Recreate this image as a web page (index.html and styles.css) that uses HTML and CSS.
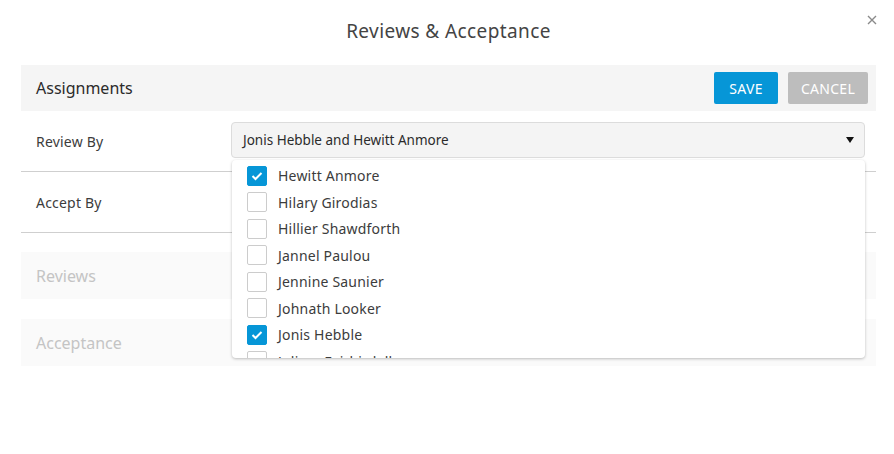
FILE: index.html
```html
<!DOCTYPE html>
<html>
<head>
<meta charset="utf-8">
<link rel="stylesheet" href="styles.css">
</head>
<body>
<div class="dialog">
  <header class="dialog-head">
    <h1 class="title">Reviews &amp; Acceptance</h1>
    <button class="close" aria-label="Close">
      <svg width="10" height="10" viewBox="0 0 10 10"><path d="M1 1L9 9M9 1L1 9" stroke="#8a8a8a" stroke-width="1.4"/></svg>
    </button>
  </header>
  <div class="section-bar">
    <span class="section-title">Assignments</span>
    <div class="actions">
      <button class="btn btn-save">SAVE</button>
      <button class="btn btn-cancel">CANCEL</button>
    </div>
  </div>
  <div class="field-row">
    <span class="field-label">Review By</span>
    <div class="select-wrap">
      <div class="select">
        <span>Jonis Hebble and Hewitt Anmore</span>
        <svg class="caret" width="8" height="6" viewBox="0 0 8 6"><path d="M0 0H8L4 6Z" fill="#111"/></svg>
      </div>
      <div class="menu">
        <ul class="menu-list">
          <li class="opt"><span class="box checked"><svg width="12" height="10" viewBox="0 0 12 10"><path d="M1.5 5L4.5 8L10.5 2" fill="none" stroke="#fff" stroke-width="2"/></svg></span>Hewitt Anmore</li>
          <li class="opt"><span class="box"></span>Hilary Girodias</li>
          <li class="opt"><span class="box"></span>Hillier Shawdforth</li>
          <li class="opt"><span class="box"></span>Jannel Paulou</li>
          <li class="opt"><span class="box"></span>Jennine Saunier</li>
          <li class="opt"><span class="box"></span>Johnath Looker</li>
          <li class="opt"><span class="box checked"><svg width="12" height="10" viewBox="0 0 12 10"><path d="M1.5 5L4.5 8L10.5 2" fill="none" stroke="#fff" stroke-width="2"/></svg></span>Jonis Hebble</li>
          <li class="opt"><span class="box"></span>Julissa Fairbirdell</li>
        </ul>
      </div>
    </div>
  </div>
  <div class="field-row">
    <span class="field-label">Accept By</span>
  </div>
  <div class="faded-bar first">Reviews</div>
  <div class="faded-bar">Acceptance</div>
</div>
</body>
</html>
```
FILE: styles.css
```css
* { box-sizing: border-box; }
html, body { margin: 0; padding: 0; background: #fff; }
body {
  font-family: "Noto Sans", "Open Sans", sans-serif;
  color: #3c3c3c;
  width: 894px;
  height: 454px;
  overflow: hidden;
}
.dialog {
  padding: 0 18px 0 21px;
}
.dialog-head {
  position: relative;
  height: 65px;
  display: flex;
  justify-content: center;
  align-items: flex-start;
}
.title {
  margin: 17px 0 0;
  font-size: 19px;
  font-weight: 400;
  line-height: 28px;
  color: #444;
  letter-spacing: 0.4px;
}
.close {
  position: absolute;
  top: 15px;
  right: -1px;
  width: 10px;
  height: 10px;
  padding: 0;
  border: 0;
  background: none;
  display: flex;
}
.section-bar {
  height: 46px;
  background: #f5f5f5;
  display: flex;
  align-items: center;
  justify-content: space-between;
  padding: 0 8px 0 15px;
}
.section-title {
  font-size: 16px;
  color: #2b2b2b;
}
.actions { display: flex; gap: 10px; }
.btn {
  height: 32px;
  border: 0;
  border-radius: 2px;
  color: #fff;
  font-family: inherit;
  font-size: 14px;
  letter-spacing: 0.3px;
  padding: 0;
}
.btn-save { width: 64px; background: #0696d7; }
.btn-cancel { width: 80px; background: #bdbdbd; }
.field-row {
  height: 61px;
  border-bottom: 1px solid #cfcfcf;
  display: flex;
  align-items: center;
  padding-left: 15px;
  position: relative;
}
.field-label {
  width: 195px;
  font-size: 14px;
  color: #3c3c3c;
  letter-spacing: 0.2px;
}
.select-wrap {
  position: relative;
  width: 634px;
  margin-top: -3px;
}
.select {
  height: 36px;
  background: #f4f4f4;
  border: 1px solid #dcdcdc;
  border-radius: 4px;
  display: flex;
  align-items: center;
  justify-content: space-between;
  padding: 0 10px 0 11px;
  font-size: 13.5px;
  color: #2b2b2b;
}
.caret { margin-top: 1px; }
.menu {
  position: absolute;
  z-index: 5;
  top: 38px;
  left: 1px;
  right: 0;
  height: 198px;
  background: #fff;
  border-radius: 4px;
  box-shadow: 0 1px 3px rgba(0,0,0,0.25);
  overflow: hidden;
}
.menu-list {
  list-style: none;
  margin: 0;
  padding: 3px 0 0 15px;
}
.opt {
  height: 26.5px;
  display: flex;
  align-items: center;
  font-size: 14px;
  color: #3c3c3c;
  letter-spacing: 0.2px;
}
.box {
  width: 20px;
  height: 20px;
  border: 1px solid #cccccc;
  border-radius: 2px;
  margin-right: 11px;
  display: flex;
  align-items: center;
  justify-content: center;
  flex: none;
}
.box.checked {
  background: #0696d7;
  border-color: #0696d7;
}
.faded-bar {
  height: 47px;
  background: #fafafa;
  display: flex;
  align-items: center;
  padding-left: 15px;
  font-size: 16px;
  color: #c4c4c4;
  margin-top: 20px;
}
.faded-bar.first { margin-top: 19px; }
```
